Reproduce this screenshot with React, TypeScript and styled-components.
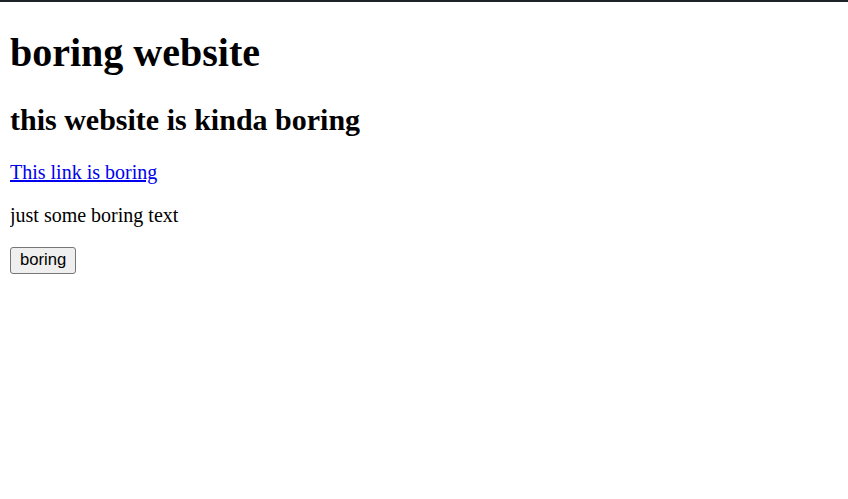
import React from "react";
import styled, { createGlobalStyle } from "styled-components";

const GlobalStyle = createGlobalStyle`
  html {
    border-top: 2px solid #1e2229;
    background: #ffffff;
  }

  body {
    margin: 10px;
    font-family: "Liberation Serif", "Times New Roman", serif;
    font-size: 20px;
    color: #000000;
  }
`;

const Title = styled.h1`
  font-size: 40px;
  font-weight: bold;
  margin: 16.8px 0 26.8px;
`;

const Subtitle = styled.h2`
  font-size: 30px;
  font-weight: bold;
  margin: 24.9px 0;
`;

const Text = styled.p`
  margin: 20px 0;
`;

const BoringLink = styled.a`
  color: #0000ee;
  text-decoration: underline;
`;

const BoringButton = styled.button`
  font-family: "Liberation Sans", Arial, sans-serif;
  font-size: 16.67px;
  line-height: 20px;
  color: #000000;
  background: #efefef;
  border: 1px solid #767676;
  border-radius: 3px;
  padding: 2px 9px 3px;
`;

export default function App() {
  return (
    <>
      <GlobalStyle />
      <Title>boring website</Title>
      <Subtitle>this website is kinda boring</Subtitle>
      <Text>
        <BoringLink href="#">This link is boring</BoringLink>
      </Text>
      <Text>just some boring text</Text>
      <BoringButton>boring</BoringButton>
    </>
  );
}
